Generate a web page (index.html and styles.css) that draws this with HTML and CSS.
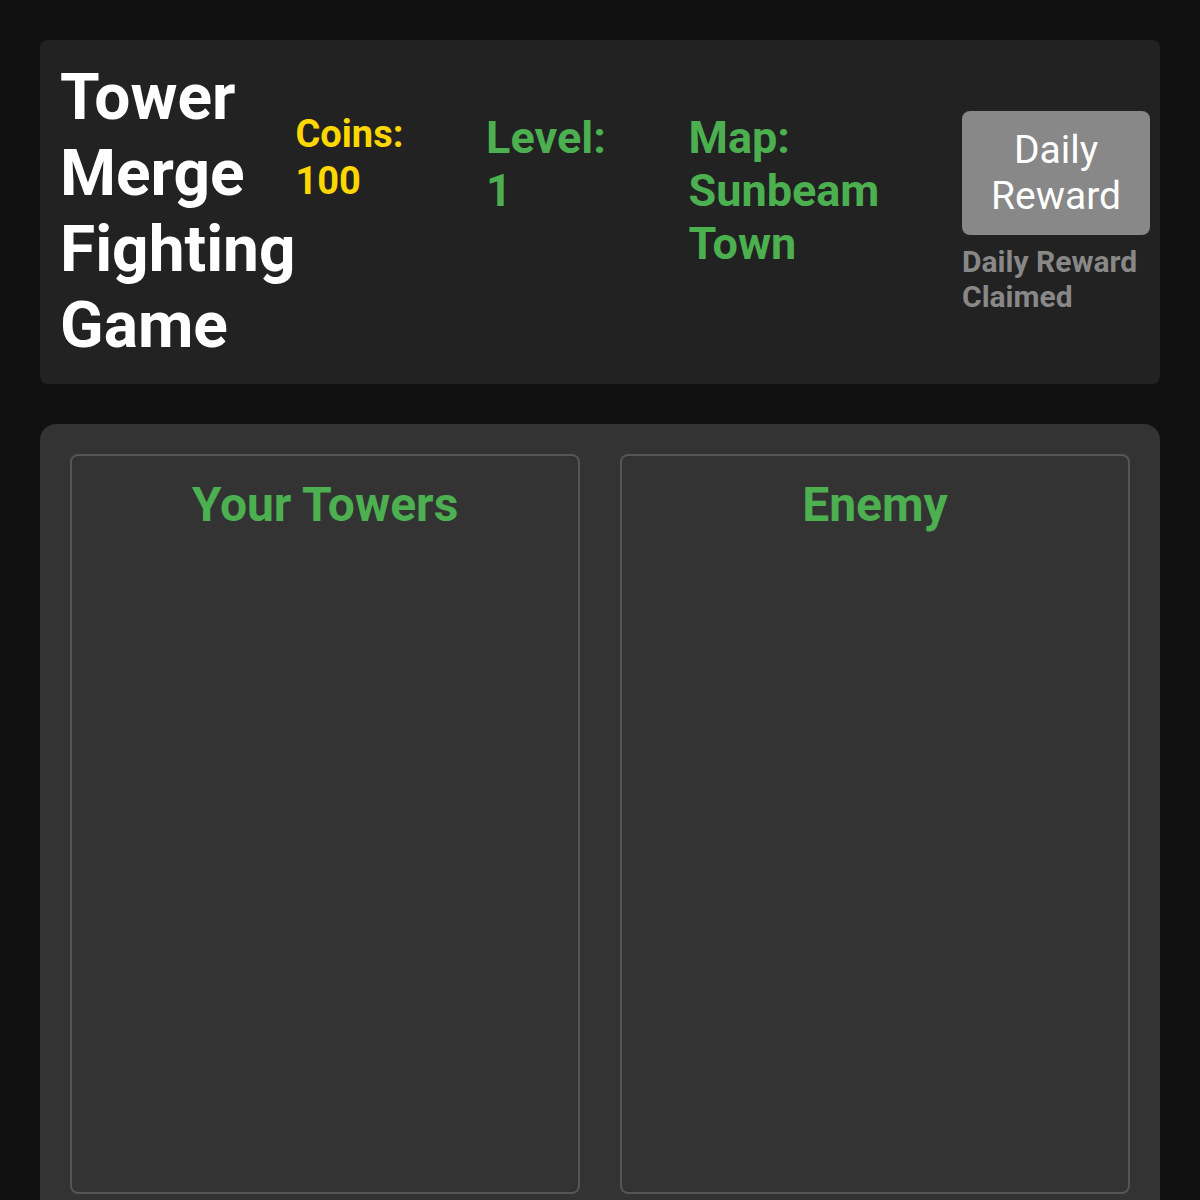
FILE: index.html
```html
<!DOCTYPE html>
<html lang="en">

<head>
    <meta charset="UTF-8" />
    <meta name="viewport" content="width=device-width" />
    <title>Tower Merge Fighting Game</title>
    <link rel="stylesheet" href="styles.css">
</head>

<body>
    <header class="top_bar">
        <h1 class="title">Tower Merge Fighting Game</h1>
        <div class="info_row">
            <div class="stat coins">Coins:<br>100</div>
            <div class="stat">Level:<br>1</div>
            <div class="stat">Map:<br>Sunbeam Town</div>
            <div class="reward_box">
                <button class="reward_btn" disabled>Daily Reward</button>
                <div class="reward_note">Daily Reward Claimed</div>
            </div>
        </div>
    </header>

    <main class="game_area">
        <section class="panel">
            <h2>Your Towers</h2>
        </section>
        <section class="panel">
            <h2>Enemy</h2>
        </section>
    </main>
</body>

</html>
```

FILE: styles.css
```css
/* === page === */

body {
    margin: 0;
    padding: 40px;
    background: #111;
    color: #fff;
    font-family: Roboto, "Liberation Sans", sans-serif;
}

/* === header bar === */

.top_bar {
    display: flex;
    align-items: center;
    background: #222;
    border-radius: 8px;
    padding: 20px 10px 20px 20px;
}

.title {
    /* one word per line */
    margin: 0;
    width: min-content;
    font-size: 64px;
    line-height: 76px;
    font-weight: 700;
}

.info_row {
    flex: 1;
    display: flex;
    align-items: flex-start;
    justify-content: space-between;
}

.stat {
    font-size: 45px;
    font-weight: 700;
    color: #4caf50;
    width: min-content;
}

.stat.coins {
    font-size: 38px;
    line-height: 47px;
    color: #ffd700;
}

.reward_box {
    width: 188px;
}

.reward_btn {
    /* claimed state, greyed out */
    display: block;
    width: 100%;
    background: #888;
    color: #fff;
    border: none;
    border-radius: 8px;
    padding: 16px 10px;
    font-family: inherit;
    font-size: 39px;
    line-height: normal;
}

.reward_note {
    margin-top: 9px;
    font-size: 30px;
    font-weight: 700;
    color: #888;
}

/* === board === */

.game_area {
    display: grid;
    grid-template-columns: 1fr 1fr;
    gap: 40px;
    margin-top: 40px;
    background: #333;
    border-radius: 16px;
    padding: 30px;
}

.panel {
    height: 740px;
    box-sizing: border-box;
    border: 2px solid #555;
    border-radius: 8px;
    padding: 20px;
}

.panel h2 {
    margin: 0;
    text-align: center;
    font-size: 48px;
    font-weight: 700;
    color: #4caf50;
}
```
